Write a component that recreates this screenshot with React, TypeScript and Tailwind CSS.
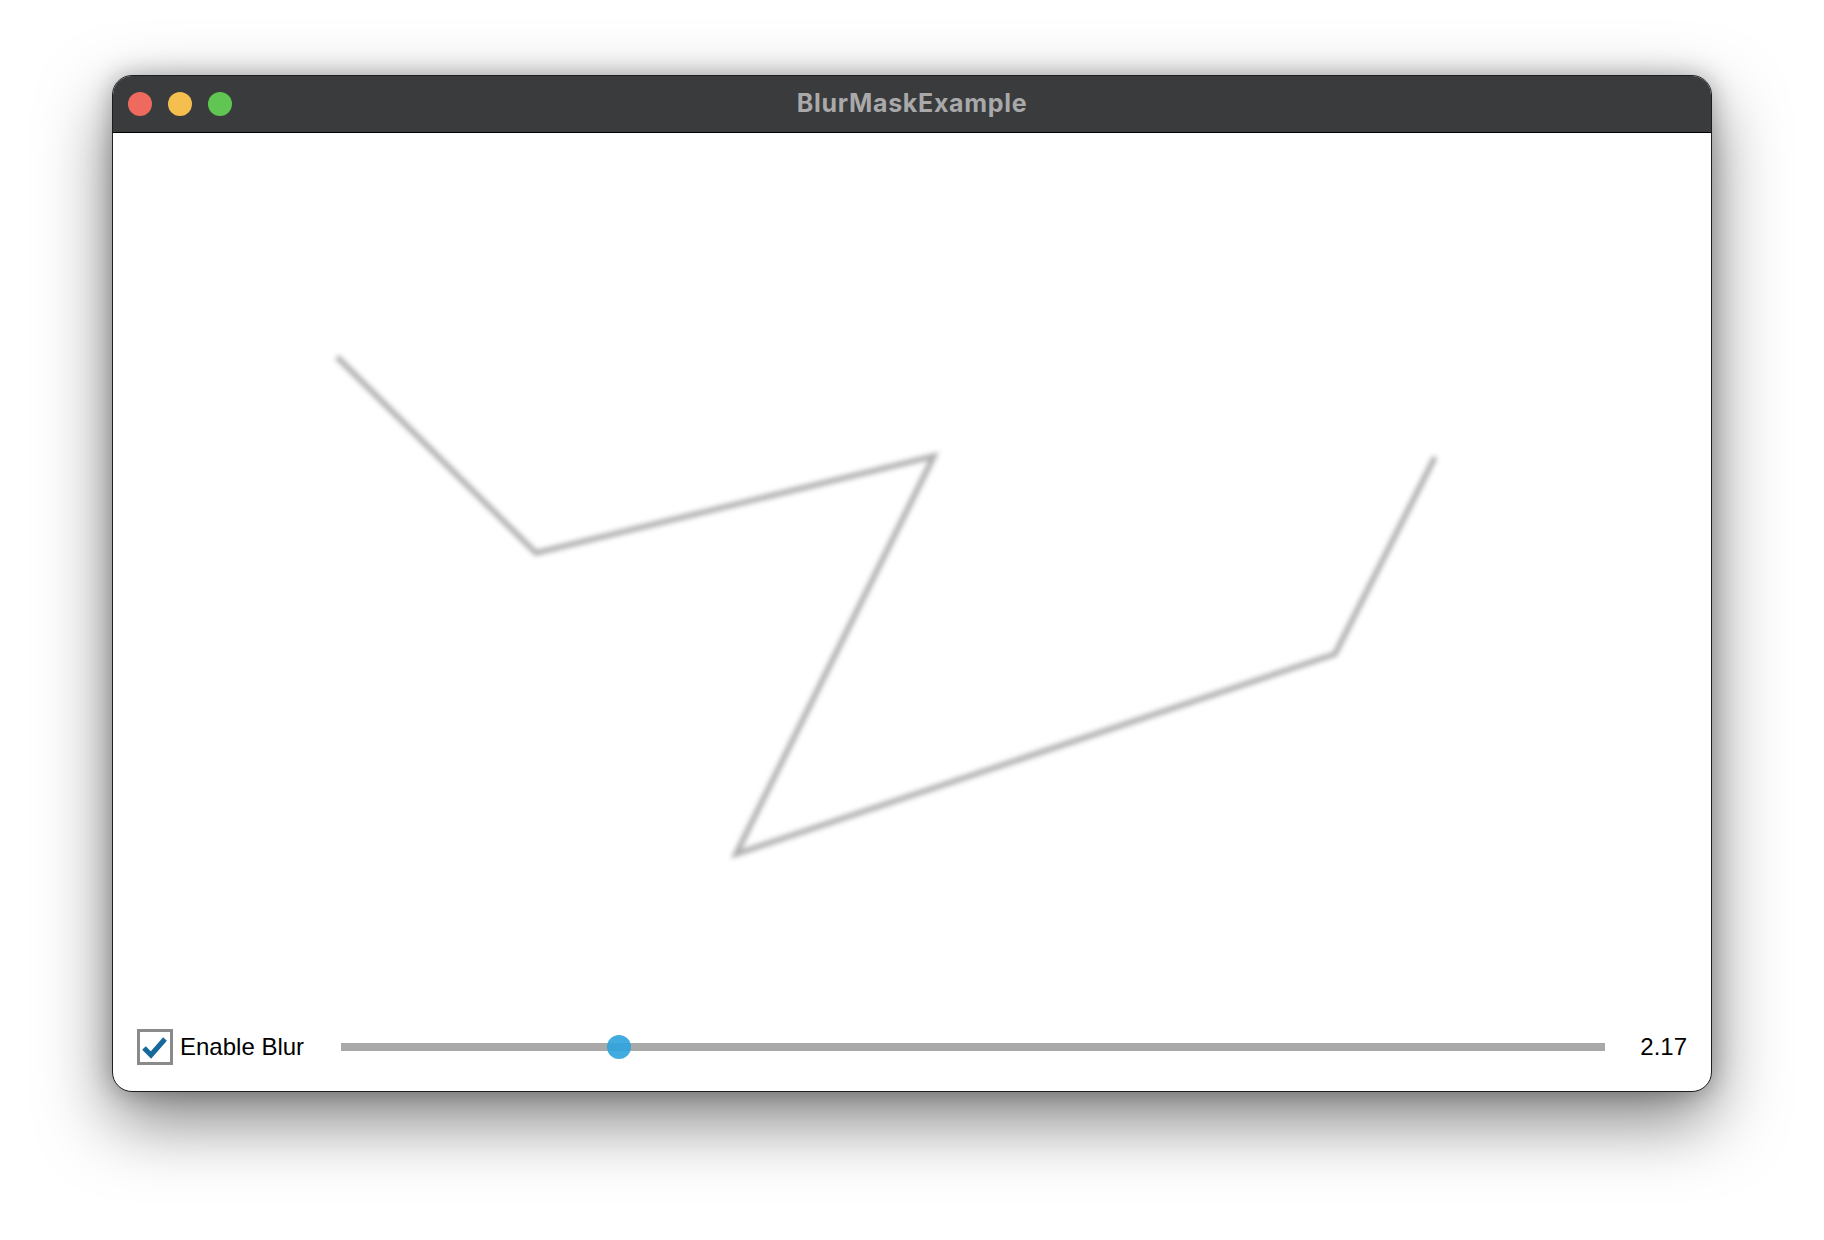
import { useState } from 'react';

// polyline vertices, in canvas pixels
const points: [number, number][] = [
  [224, 224],
  [423, 420],
  [821, 323],
  [623, 721],
  [1222, 521],
  [1322, 324],
];

function TrafficLights() {
  return (
    <div className="flex items-center gap-4 pl-[15px]">
      <div className="w-6 h-6 rounded-full bg-[#ee6a5f]" />
      <div className="w-6 h-6 rounded-full bg-[#f5bf4f]" />
      <div className="w-6 h-6 rounded-full bg-[#61c554]" />
    </div>
  );
}

function Checkbox({ checked, onChange }: { checked: boolean; onChange: () => void }) {
  return (
    <button
      onClick={onChange}
      className="w-9 h-9 border-[3px] border-[#8a8a8a] bg-white flex items-center justify-center p-0"
    >
      {checked && (
        <svg width="30" height="30" viewBox="0 0 30 30">
          <path d="M4 16 L11 23 L25 7" fill="none" stroke="#17689b" strokeWidth={5} strokeLinecap="butt" strokeLinejoin="miter" />
        </svg>
      )}
    </button>
  );
}

export default function App() {
  const [blur, setBlur] = useState(true);
  const value = 2.17;
  const pct = 22;

  return (
    <div className="w-[1824px] h-[1240px] bg-white pl-[112px] pt-[75px]">
      <div className="w-[1600px] h-[1017px] flex flex-col rounded-[20px] overflow-hidden border border-[#1e1e1e] bg-white shadow-[0_28px_70px_rgba(0,0,0,0.5),0_0_24px_rgba(0,0,0,0.28)]">
        {/* Title bar */}
        <div className="relative h-[57px] flex items-center bg-[#3a3b3d] border-b border-black shrink-0">
          <TrafficLights />
          <div className="absolute inset-0 flex items-center justify-center pointer-events-none">
            <span className="font-['Inter',sans-serif] font-bold text-[25px] text-[#a9a9aa] tracking-[0.7px]">
              BlurMaskExample
            </span>
          </div>
        </div>

        {/* Canvas */}
        <div className="flex-1">
          <svg width="1598" height="870" viewBox="0 0 1598 870" className="block">
            <defs>
              <filter id="blur" x="-10%" y="-10%" width="120%" height="120%">
                <feGaussianBlur stdDeviation={2.8} />
              </filter>
            </defs>
            <polyline
              points={points.map((p) => p.join(',')).join(' ')}
              fill="none"
              stroke="#9a9a9a"
              strokeWidth={5.5}
              strokeLinejoin="miter"
              filter={blur ? 'url(#blur)' : undefined}
              opacity={0.8}
            />
          </svg>
        </div>

        {/* Controls */}
        <div className="h-[88px] shrink-0 flex items-center px-6 font-['Liberation_Sans',Arial,sans-serif] text-[24px] text-black">
          <Checkbox checked={blur} onChange={() => setBlur(!blur)} />
          <span className="ml-[7px] leading-none">Enable Blur</span>
          <div className="relative flex-1 h-2 ml-[37px] mr-[35px] bg-[#a9a9a9]">
            <div
              className="absolute top-1/2 w-6 h-6 -ml-3 -mt-3 rounded-full bg-[#2ea2dc] opacity-90"
              style={{ left: `${pct}%` }}
            />
          </div>
          <span className="leading-none">{value.toFixed(2)}</span>
        </div>
      </div>
    </div>
  );
}
